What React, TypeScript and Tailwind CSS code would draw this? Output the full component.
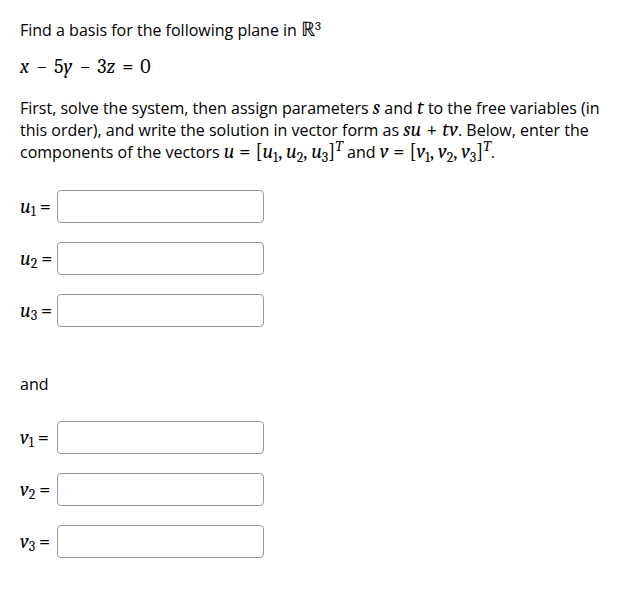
import React from 'react';

const M = ({ children }: { children: React.ReactNode }) => (
  <span className="font-serif italic text-[20px]">{children}</span>
);

const R = ({ children }: { children: React.ReactNode }) => (
  <span className="font-serif not-italic text-[20px]">{children}</span>
);

const Op = ({ children, wide }: { children: React.ReactNode; wide?: boolean }) => (
  <span className={`font-serif not-italic text-[20px] ${wide ? 'mx-[7px]' : 'mx-[5px]'}`}>{children}</span>
);

const Sub = ({ children }: { children: React.ReactNode }) => (
  <sub className="font-serif text-[14px]">{children}</sub>
);

const T = () => <sup className="font-serif italic text-[15px]">T</sup>;

function Field({ name, idx }: { name: string; idx: number }) {
  return (
    <div className="flex items-center h-[33px]">
      <span className="w-[37px] font-serif text-[20px] flex items-baseline">
        <span className="italic">{name}</span>
        <span className="text-[14px] relative top-[3px]">{idx}</span>
        <span className="ml-[4px]">=</span>
      </span>
      <input
        type="text"
        className="w-[207px] h-[33px] border border-[#999] rounded-[4px] bg-white outline-none"
      />
    </div>
  );
}

export default function App() {
  return (
    <div className="bg-white min-h-screen pl-5 pr-4 pt-[19px] font-[family-name:Open_Sans] text-[16px] text-black">
      <p className="leading-[22px]">
        Find a basis for the following plane in <R>ℝ</R>
        <sup className="font-serif text-[13px]">3</sup>
      </p>
      <p className="mt-[15px] leading-[22px]">
        <M>x</M>
        <Op wide>−</Op>
        <R>5</R>
        <M>y</M>
        <Op wide>−</Op>
        <R>3</R>
        <M>z</M>
        <Op wide>=</Op>
        <R>0</R>
      </p>
      <p className="mt-[19px] leading-[21px]">
        First, solve the system, then assign parameters <M>s</M> and <M>t</M> to the free variables (in
        this order), and write the solution in vector form as <M>su</M>
        <Op>+</Op>
        <M>tv</M>. Below, enter the components of the vectors <M>u</M>
        <Op>=</Op>
        <R>[</R>
        <M>u</M>
        <Sub>1</Sub>
        <R>, </R>
        <M>u</M>
        <Sub>2</Sub>
        <R>, </R>
        <M>u</M>
        <Sub>3</Sub>
        <R>]</R>
        <T /> and <M>v</M>
        <Op>=</Op>
        <R>[</R>
        <M>v</M>
        <Sub>1</Sub>
        <R>, </R>
        <M>v</M>
        <Sub>2</Sub>
        <R>, </R>
        <M>v</M>
        <Sub>3</Sub>
        <R>]</R>
        <T />.
      </p>
      <div className="mt-[27px] flex flex-col gap-[19px]">
        <Field name="u" idx={1} />
        <Field name="u" idx={2} />
        <Field name="u" idx={3} />
      </div>
      <p className="mt-[46px] leading-[22px]">and</p>
      <div className="mt-[26px] flex flex-col gap-[19px]">
        <Field name="v" idx={1} />
        <Field name="v" idx={2} />
        <Field name="v" idx={3} />
      </div>
    </div>
  );
}
